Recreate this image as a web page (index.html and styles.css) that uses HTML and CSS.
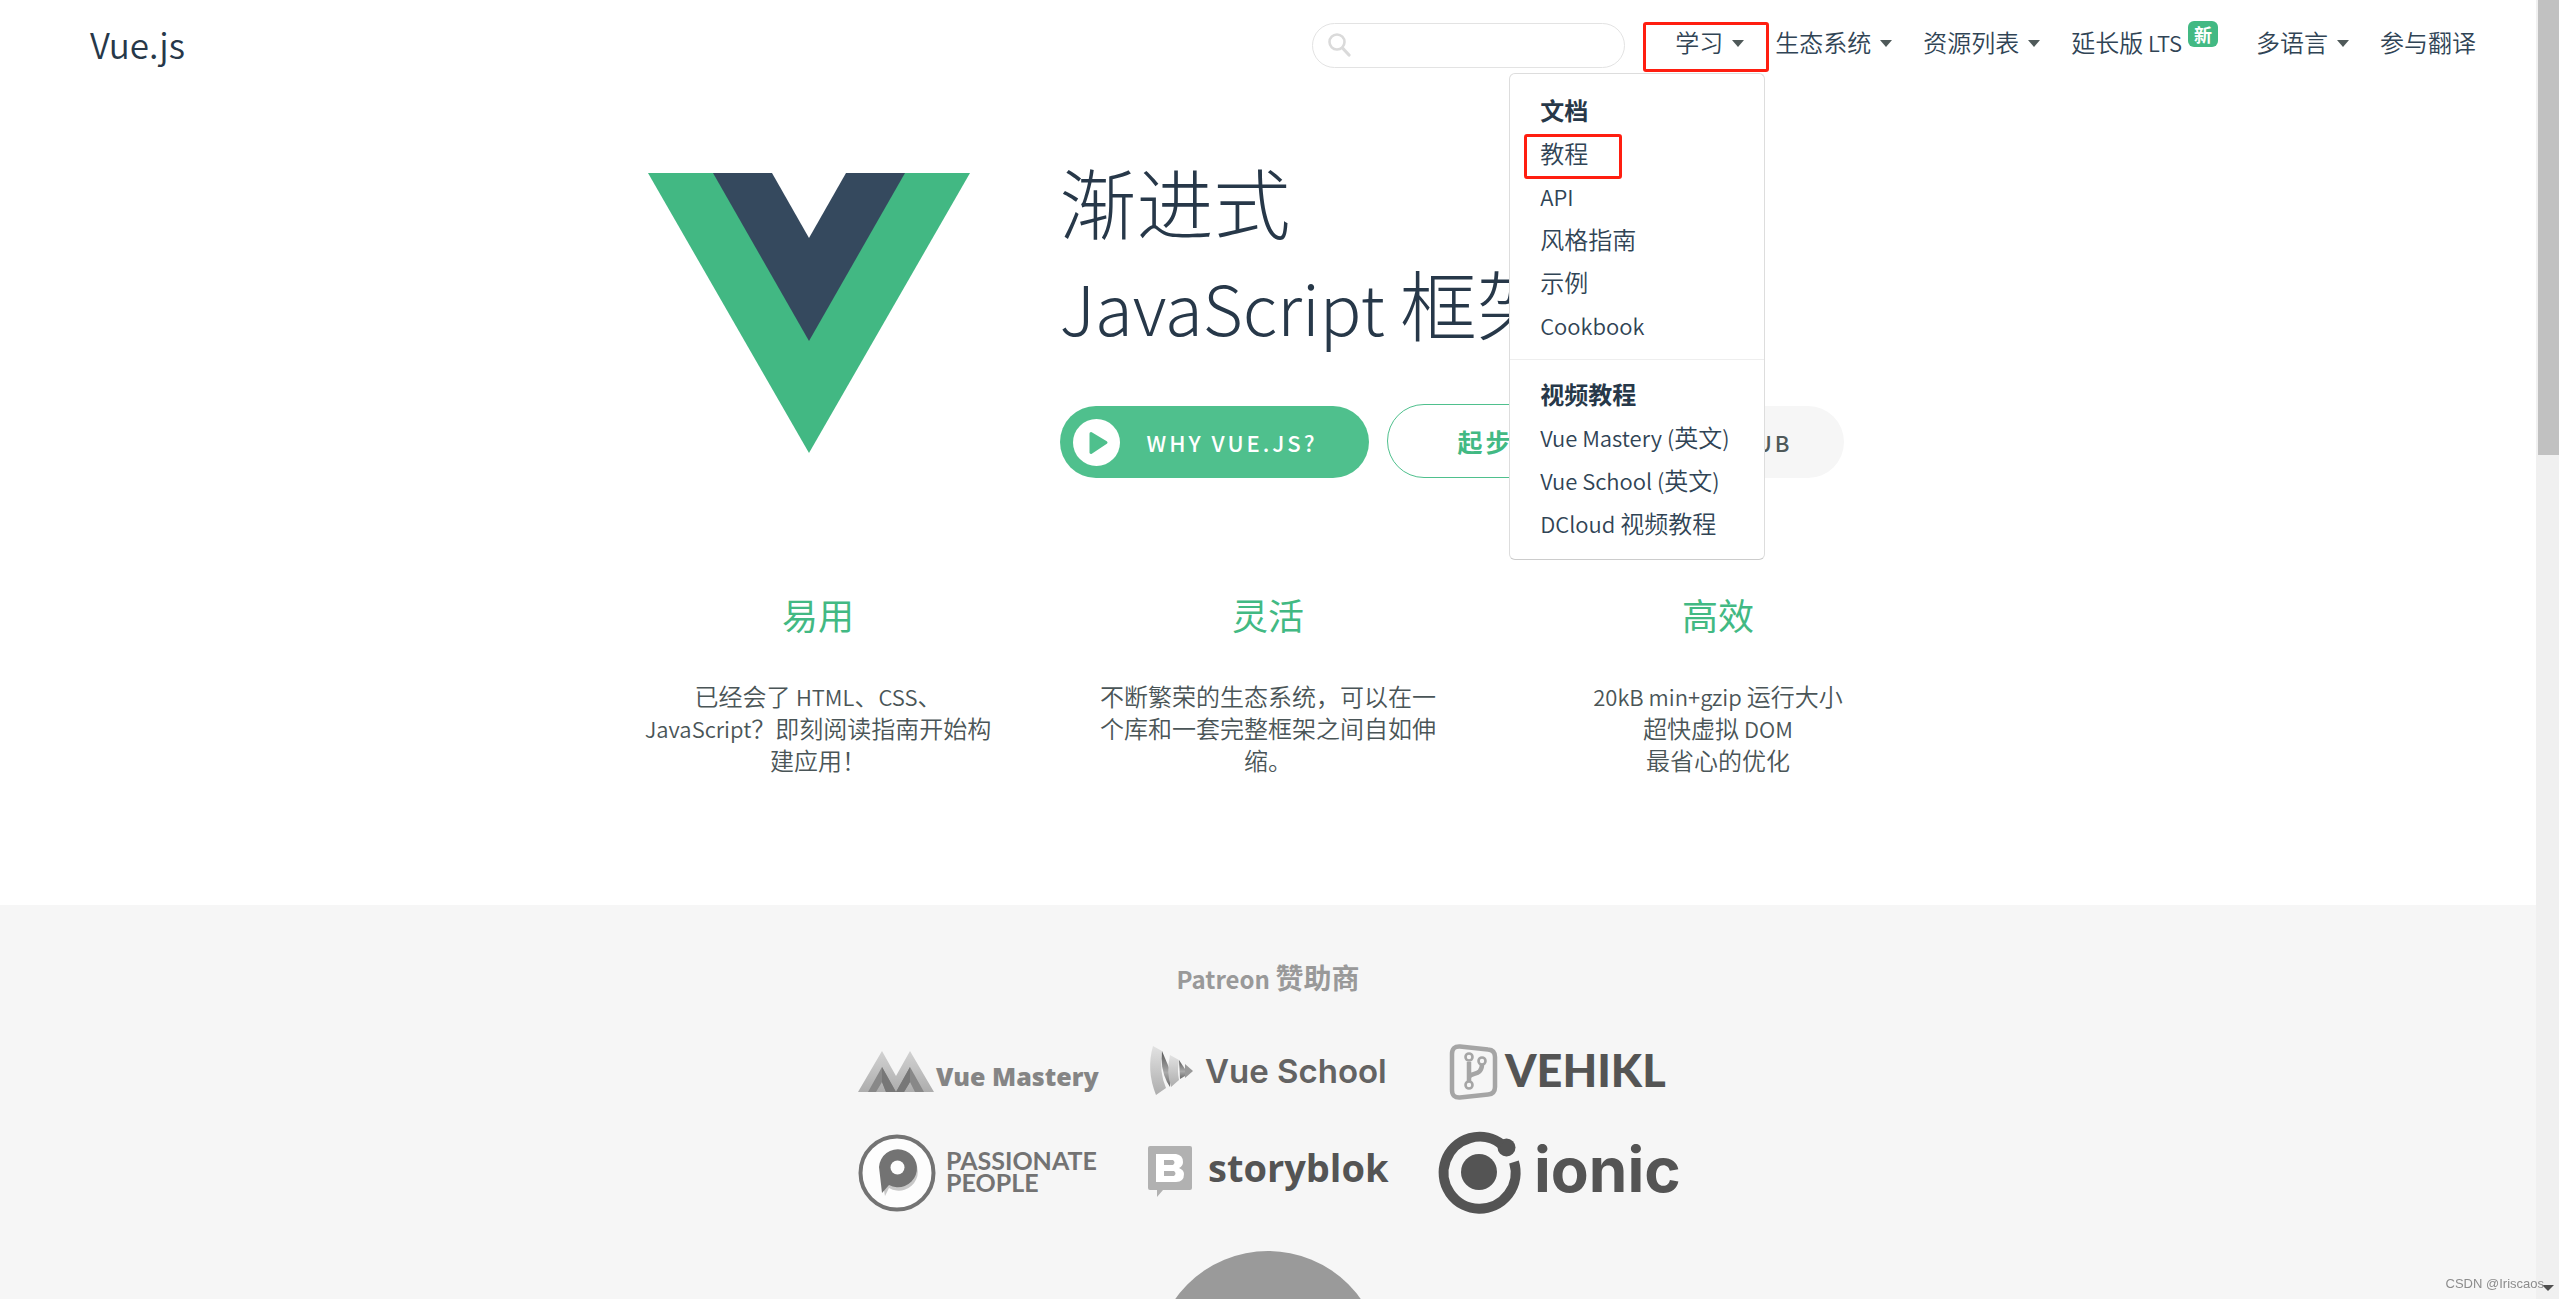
FILE: index.html
```html
<!DOCTYPE html>
<html lang="zh-CN">
<head>
<meta charset="utf-8">
<title>Vue.js</title>
<link rel="stylesheet" href="styles.css">
</head>
<body>
<header class="header">
  <a class="brand" href="#">Vue.js</a>
  <nav class="nav">
    <label class="search" aria-label="搜索">
      <svg class="search-icon" viewBox="0 0 24 24"><circle cx="9" cy="9" r="7.5" fill="none" stroke="currentColor" stroke-width="2.6"/><path d="M14.5 15 21 22" stroke="currentColor" stroke-width="3.2" stroke-linecap="round"/></svg>
      <input class="search-input" type="text">
    </label>
    <div class="nav-item marked">
      <a class="nav-link arrow" href="#">学习</a>
      <div class="menu">
        <ul class="menu-group">
          <li><h4 class="menu-title">文档</h4></li>
          <li><a class="menu-link marked-link" href="#">教程</a></li>
          <li><a class="menu-link" href="#"><span class="en">API</span></a></li>
          <li><a class="menu-link" href="#">风格指南</a></li>
          <li><a class="menu-link" href="#">示例</a></li>
          <li><a class="menu-link" href="#"><span class="en">Cookbook</span></a></li>
        </ul>
        <ul class="menu-group">
          <li><h4 class="menu-title">视频教程</h4></li>
          <li><a class="menu-link" href="#"><span class="en">Vue Mastery (</span>英文<span class="en">)</span></a></li>
          <li><a class="menu-link" href="#"><span class="en">Vue School (</span>英文<span class="en">)</span></a></li>
          <li><a class="menu-link" href="#"><span class="en">DCloud </span>视频教程</a></li>
        </ul>
      </div>
    </div>
    <div class="nav-item"><a class="nav-link arrow" href="#">生态系统</a></div>
    <div class="nav-item"><a class="nav-link arrow" href="#">资源列表</a></div>
    <div class="nav-item lts"><a class="nav-link" href="#">延长版<span class="en"> LTS</span></a><span class="badge">新</span></div>
    <div class="nav-item"><a class="nav-link arrow" href="#">多语言</a></div>
    <div class="nav-item"><a class="nav-link" href="#">参与翻译</a></div>
  </nav>
</header>

<main>
  <section class="hero">
    <svg class="hero-logo" viewBox="0 0 322 280"><path fill="#42b883" d="M0 0H322L161 280Z"/><path fill="#35495e" d="M65 0H257L161 168Z"/><path fill="#fff" d="M124 0H198L161 65Z"/></svg>
    <div class="hero-body">
      <h1 class="hero-title">渐进式<br><span class="en-title">JavaScript </span>框架</h1>
      <div class="actions">
        <button class="btn btn-video" type="button">
          <svg class="play" viewBox="0 0 47 47"><circle cx="23.500" cy="23.500" r="23.500" fill="#fff"/><path d="M18 14.500 33 23.500 18 33.500Z" fill="currentColor" stroke="currentColor" stroke-width="3" stroke-linejoin="round"/></svg>
          WHY VUE.JS?
        </button>
        <a class="btn btn-start" href="#">起步</a>
        <a class="btn btn-github" href="#">GITHUB</a>
      </div>
    </div>
  </section>

  <section class="features">
    <div class="feature"><h2 class="feature-title">易用</h2><p class="feature-text">已经会了 <span class="en">HTML</span>、<span class="en">CSS</span>、<wbr><span class="en">JavaScript</span>？即刻阅读指南开始构建应用！</p></div>
    <div class="feature"><h2 class="feature-title">灵活</h2><p class="feature-text">不断繁荣的生态系统，可以在一个库和一套完整框架之间自如伸缩。</p></div>
    <div class="feature"><h2 class="feature-title">高效</h2><p class="feature-text"><span class="en">20kB min+gzip </span>运行大小<br>超快虚拟<span class="en"> DOM</span><br>最省心的优化</p></div>
  </section>

  <section class="sponsors">
    <h3 class="sponsors-title"><span class="en-sponsors">Patreon </span>赞助商</h3>
    <div class="sponsor-grid">
      <a href="#"><svg class="sponsor" viewBox="0 0 240 82">
        <defs><linearGradient id="peak" x1="0" y1="0" x2="0" y2="1"><stop offset="0" stop-color="#d2d2d2"/><stop offset="1" stop-color="#adadad"/></linearGradient></defs>
        <path fill="url(#peak)" d="M24 21 38 46 52 21 76 62H0Z"/>
        <path fill="#888" d="M24 37 38 62H28L24 52 18 62H10ZM52 37 66 62H57L52 52 46 62H38Z"/>
        <path fill="#777" d="M24 37 38 62H28L24 52ZM52 37V52L46 62H38Z"/>
        <text class="logo-mastery" x="78" y="56">Vue Mastery</text></svg></a>
      <a href="#"><svg class="sponsor" viewBox="0 0 240 82">
        <defs><linearGradient id="fan" x1="0" y1="0" x2="0" y2="1"><stop offset="0" stop-color="#e2e2e2"/><stop offset="1" stop-color="#adadad"/></linearGradient><linearGradient id="fold" x1="0" y1="0" x2="0" y2="1"><stop offset="0" stop-color="#555"/><stop offset=".6" stop-color="#aaa"/><stop offset="1" stop-color="#666"/></linearGradient></defs>
        <path fill="url(#fan)" d="M5 16 14 21Q11 42 18 58L8 65Q-2 40 5 16Z"/>
        <path fill="url(#fold)" d="M14 21 22 40V57L19 52Q12 38 14 21Z"/>
        <path fill="url(#fan)" d="M22 25 31 30Q29 41 31 50L23 57Q18 42 22 25Z"/>
        <path fill="url(#fold)" d="M31 30 37 39V46L32 49Z"/>
        <path fill="#9a9a9a" d="M37 34 45 41 37 48Z"/>
        <text class="logo-school" x="57" y="53">Vue School</text></svg></a>
      <a href="#"><svg class="sponsor" viewBox="0 0 240 82">
        <g fill="none" stroke="#a5a5a5" stroke-width="4.500"><path d="M22 16.500 50 19.500Q57 20 57 27V57Q57 64 50 64.500L22 67.500Q14 68 14 60V24Q14 16 22 16.500Z"/><path d="M31 32V51M31 47C34 42 44 46 44 34"/><circle cx="31" cy="27" r="3.500" stroke-width="2.600"/><circle cx="44" cy="31" r="3.500" stroke-width="2.600"/><circle cx="31" cy="55" r="3.500" stroke-width="2.600"/></g>
        <text class="logo-vehikl" x="67" y="57">VEHIKL</text></svg></a>
      <a href="#"><svg class="sponsor" viewBox="0 0 240 82">
        <circle cx="39" cy="42" r="36.500" fill="#fdfdfd" stroke="#737373" stroke-width="4"/>
        <path fill="#c8c8c8" d="M27 65 31 57A19 19 0 1 0 22 38Z"/>
        <path fill="#737373" d="M24 62 31 54A19 19 0 1 0 21 36Z"/>
        <circle cx="39.500" cy="36.500" r="7" fill="#fdfdfd"/>
        <text class="logo-people" x="88" y="39">PASSIONATE</text><text class="logo-people" x="88" y="61">PEOPLE</text></svg></a>
      <a href="#"><svg class="sponsor" viewBox="0 0 240 82">
        <path fill="#b1b1b1" d="M2 15H42Q44 15 44 17V57Q44 59 42 59H15L9 66V59H2Q0 59 0 57V17Q0 15 2 15Z"/>
        <path fill="#fff" fill-rule="evenodd" d="M8 23H28Q35 24 35 31 35 35 31 37 36 39 36 43 36 51 28 51H8ZM16 29V34H25Q28 31.500 25 29ZM16 40V45H26Q29 42.500 26 40Z"/>
        <text class="logo-storyblok" x="60" y="51">storyblok</text></svg></a>
      <a href="#"><svg class="sponsor" viewBox="0 0 240 82">
        <g fill="#545454"><circle cx="41" cy="41" r="18"/><circle cx="68.500" cy="16.500" r="9"/></g>
        <path fill="none" stroke="#545454" stroke-width="10" d="M64 13.500A36 36 0 1 0 76 31"/>
        <text class="logo-ionic" x="96" y="61">ionic</text></svg></a>
    </div>
    <div class="avatar"></div>
  </section>
</main>

<div class="scrollbar"><div class="scroll-thumb"></div><div class="scroll-down"></div></div>
<p class="watermark">CSDN @Iriscaos</p>
</body>
</html>
```
FILE: styles.css
```css
*, *::after { box-sizing: border-box; }
html { height: 100%; overflow: hidden; }
body {
  margin: 0;
  min-height: 100%;
  padding-right: 23px;
  background: #fff;
  color: #4a5557;
  font-family: "Noto Sans CJK SC", "Noto Sans", sans-serif;
  font-size: 24px;
  font-weight: 350;
  line-height: 32px;
}
a { color: inherit; text-decoration: none; }
h1, h2, h3, h4, p, ul { margin: 0; padding: 0; }
ul { list-style: none; }
.en { font-size: 22px; line-height: 1; }

.header {
  display: flex;
  justify-content: space-between;
  align-items: center;
  height: 88px;
  padding: 0 60px 0 90px;
}
.brand { color: #273849; font-size: 35px; }
.nav { display: flex; align-items: center; gap: 31px; color: #304455; }
.search {
  display: flex;
  align-items: center;
  width: 313px;
  height: 45px;
  margin: 2px 19px 0 0;
  padding: 0 15px;
  border: 1px solid #e3e3e3;
  border-radius: 23px;
  color: #dadada;
}
.search-icon { width: 24px; height: 24px; }
.search-input { flex: 1; min-width: 0; border: 0; outline: 0; background: none; font: inherit; }
.nav-item { position: relative; display: flex; height: 32px; margin-bottom: 4px; }
.nav-link { display: flex; align-items: center; white-space: pre; }
.arrow::after {
  content: "";
  margin: 2px 0 0 9px;
  border: 6px solid transparent;
  border-top: 7px solid #4f5959;
  border-bottom: 0;
}
.lts { margin-right: 7px; }
.badge {
  align-self: flex-start;
  width: 30px;
  height: 26px;
  margin: -5px 0 0 6px;
  border-radius: 6px;
  background: #42b983;
  color: #fff;
  font-size: 18px;
  font-weight: 700;
  line-height: 26px;
  text-align: center;
}
.marked::after {
  content: "";
  position: absolute;
  top: -4px;
  left: -32px;
  width: 126px;
  height: 50px;
  border: 3px solid #ff1e10;
  border-radius: 3px;
  pointer-events: none;
}

.menu {
  position: absolute;
  z-index: 2;
  top: 47px;
  right: -21px;
  width: 256px;
  padding: 14px 0 15px;
  border: 1px solid #ddd;
  border-bottom-color: #ccc;
  border-radius: 6px;
  background: #fff;
  line-height: 43px;
}
.menu-group { padding: 0 30px; }
.menu-group + .menu-group { margin-top: 13px; padding-top: 12px; border-top: 1px solid #eee; }
.menu-title { color: #273849; font-size: 24px; font-weight: 700; }
.menu-link { position: relative; display: block; height: 43px; white-space: pre; }
.marked-link::after {
  content: "";
  position: absolute;
  top: 3px;
  left: -16px;
  width: 98px;
  height: 45px;
  border: 3px solid #ff1e10;
  border-radius: 3px;
}

.hero {
  display: flex;
  justify-content: center;
  gap: 90px;
  padding: 62px 45px 0 0;
}
.hero-logo { width: 322px; height: 280px; margin-top: 23px; }
.hero-title { color: #273849; font-size: 77px; font-weight: 300; line-height: 102px; }
.en-title { font-size: 69px; line-height: 1; }
.actions { display: flex; align-items: flex-end; gap: 18px; margin-top: 50px; }
.btn {
  display: flex;
  align-items: center;
  justify-content: center;
  height: 72px;
  padding: 0 51px;
  border: 0;
  border-radius: 36px;
  background: #f6f6f6;
  color: #4f5959;
  font-family: inherit;
  font-size: 22px;
  font-weight: 500;
  letter-spacing: 3px;
}
.btn-video { gap: 27px; width: 309px; padding: 0 13px; justify-content: flex-start; background: #4fc08d; color: #fff; }
.play { width: 47px; height: 47px; color: #4fc08d; }
.btn-start { width: 198px; height: 74px; border: 1px solid #4fc08d; border-radius: 37px; background: #fff; color: #42b983; font-size: 25px; font-weight: 700; }
.btn-github { width: 241px; justify-content: flex-end; }

.features {
  display: grid;
  grid-template-columns: repeat(3, 450px);
  justify-content: center;
  padding: 112px 0 129px;
}
.feature { display: flex; flex-direction: column; align-items: center; gap: 42px; text-align: center; }
.feature-title { color: #42b983; font-size: 36px; font-weight: 400; line-height: 48px; }
.feature-text { width: 350px; }

.sponsors {
  display: flex;
  flex-direction: column;
  align-items: center;
  padding: 52px 0 60px;
  background: #f6f6f6;
}
.sponsors-title { color: #999; font-size: 28px; font-weight: 700; line-height: 40px; }
.en-sponsors { font-size: 24px; line-height: 1; }
.sponsor-grid { display: grid; grid-template-columns: repeat(3, 240px); gap: 19px 50px; margin-top: 33px; }
.sponsor { display: block; width: 240px; height: 82px; overflow: visible; }
.logo-mastery { fill: #858585; font: 800 25px "Open Sans", sans-serif; }
.logo-school { fill: #636363; font: 600 33px Inter, sans-serif; }
.logo-vehikl { fill: #545454; font: 900 45px Lato, sans-serif; }
.logo-people { fill: #737373; font: 700 25px Lato, sans-serif; }
.logo-storyblok { fill: #545454; font: 700 38px "Open Sans", sans-serif; }
.logo-ionic { fill: #545454; font: 700 62px Inter, sans-serif; }
.avatar { width: 228px; height: 228px; margin-top: 38px; border-radius: 50%; background: #9a9a9a; }

.scrollbar {
  position: fixed;
  inset: 0 0 0 auto;
  width: 23px;
  padding-left: 2px;
  background: #f0f0f0;
}
.scroll-thumb { height: 35%; background: #c1c1c1; }
.scroll-down {
  position: absolute;
  right: 5px;
  bottom: 8px;
  border: 6px solid transparent;
  border-top-color: #505050;
  border-bottom: 0;
}
.watermark {
  position: fixed;
  right: 15px;
  bottom: 7px;
  color: #8c8c8c;
  font: 13px/16px "Liberation Sans", sans-serif;
}
```
